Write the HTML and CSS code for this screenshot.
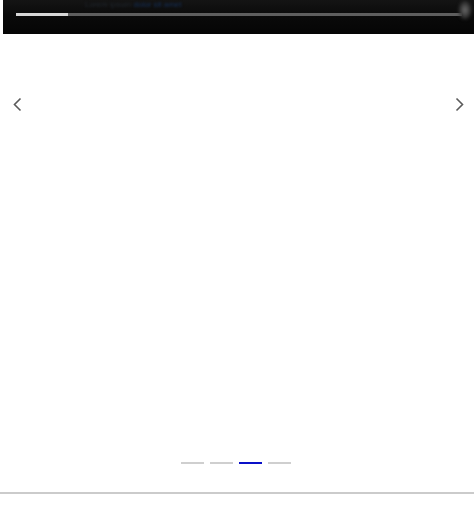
FILE: index.html
```html
<!DOCTYPE html>
<html lang="en">
<head>
<meta charset="utf-8">
<title>Carousel</title>
<link rel="stylesheet" href="styles.css">
</head>
<body>
<div class="player">
  <div class="player-title"><span class="t1">Lorem ipsum</span> <span class="t2">dolor sit amet</span></div>
  <div class="progress"><div class="progress-fill" style="width: 11.7%"></div></div>
  <div class="player-corner"></div>
</div>
<div class="carousel">
  <div class="slide">
    <button class="nav nav-prev" aria-label="Previous">
      <svg width="9" height="15" viewBox="0 0 9 15"><polyline points="7.5,1.5 1.5,7.5 7.5,13.5" fill="none" stroke="#5a5a5a" stroke-width="1.6"/></svg>
    </button>
    <button class="nav nav-next" aria-label="Next">
      <svg width="9" height="15" viewBox="0 0 9 15"><polyline points="1.5,1.5 7.5,7.5 1.5,13.5" fill="none" stroke="#5a5a5a" stroke-width="1.6"/></svg>
    </button>
  </div>
  <div class="indicators">
    <span class="dot"></span>
    <span class="dot"></span>
    <span class="dot active"></span>
    <span class="dot"></span>
  </div>
</div>
<div class="divider"></div>
</body>
</html>
```
FILE: styles.css
```css
html, body {
  margin: 0;
  padding: 0;
  background: #ffffff;
  font-family: "Liberation Sans", Arial, sans-serif;
}
.player {
  position: relative;
  margin-left: 3px;
  height: 34px;
  background: linear-gradient(180deg, #141414 0%, #0a0a0a 45%, #050505 100%);
  overflow: hidden;
  box-sizing: border-box;
  padding: 13px 12px 0 13px;
}
.player-title {
  position: absolute;
  top: 0;
  left: 82px;
  font-size: 8px;
  line-height: 9px;
  filter: blur(1.2px);
  white-space: nowrap;
}
.player-title .t1 { color: #20262e; }
.player-title .t2 { color: #15305a; }
.progress {
  height: 3px;
  background: #5e5e5e;
}
.progress-fill {
  height: 100%;
  background: #d6d6d6;
}
.player-corner {
  position: absolute;
  right: 2px;
  top: 0;
  width: 14px;
  height: 20px;
  background: radial-gradient(ellipse at center, #6a6a6a 0%, #333 50%, rgba(0,0,0,0) 75%);
  filter: blur(1.5px);
}
.carousel {
  display: flex;
  flex-direction: column;
}
.slide {
  position: relative;
  height: 428px;
}
.nav {
  position: absolute;
  top: 63px;
  width: 9px;
  height: 15px;
  padding: 0;
  border: 0;
  background: transparent;
  display: flex;
}
.nav-prev { left: 13px; }
.nav-next { left: 455px; }
.indicators {
  display: flex;
  justify-content: center;
  gap: 6px;
  padding-right: 2px;
}
.dot {
  width: 23px;
  height: 2px;
  background: #cfcfcf;
}
.dot.active {
  background: #0a10c8;
}
.divider {
  margin-top: 28px;
  height: 2px;
  background: #cbcbcb;
}
```
